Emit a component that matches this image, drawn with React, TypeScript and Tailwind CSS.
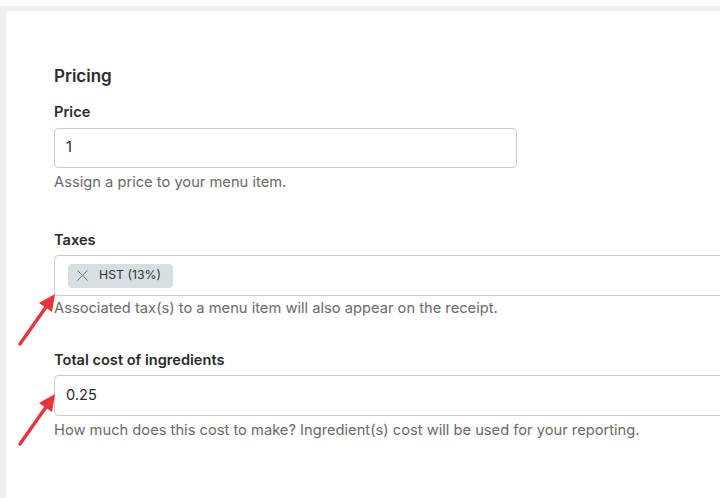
import React from "react";

function Arrow({ className }: { className: string }) {
  return (
    <svg
      className={className}
      width="44"
      height="56"
      viewBox="0 0 44 56"
      fill="none"
    >
      <line x1="4" y1="52" x2="30" y2="15" stroke="#e8343a" strokeWidth="3.4" strokeLinecap="round" />
      <polygon points="39,2 23,11 36,20" fill="#e8343a" />
    </svg>
  );
}

export default function App() {
  const font = { fontFamily: 'Inter, "Liberation Sans", Arial, sans-serif' };
  return (
    <div className="w-[720px] h-[498px] overflow-hidden bg-white pt-[6px]" style={font}>
      <div className="h-full bg-[#efefef] pl-[6px] pt-[5px]">
        <div className="relative h-full bg-white rounded-tl-[3px] pl-[48px] pt-[54px] text-[#2b2b2b]">
          <h2 className="text-[17px] leading-[22px] font-semibold">Pricing</h2>

          <div className="mt-[15px] text-[14.6px] leading-[20px] font-semibold">Price</div>
          <div className="mt-[6px] w-[463px] h-[40px] rounded-[4px] border border-[#cccccc] flex items-center pl-[11px] text-[14.6px]">
            1
          </div>
          <div className="mt-[4px] text-[14.7px] leading-[20px] text-[#6a6a6a]">
            Assign a price to your menu item.
          </div>

          <div className="mt-[38px] text-[14.6px] leading-[20px] font-semibold">Taxes</div>
          <div className="mt-[5px] w-[700px] h-[41px] rounded-[4px] border border-[#cccccc] flex items-center pl-[13px]">
            <div className="flex items-center h-[24px] rounded-[4px] bg-[#d8dfe2] pl-[9px] pr-[12px]">
              <svg width="11" height="11" viewBox="0 0 11 11" className="mr-[11px]">
                <path d="M0.5 0.5 L10.5 10.5 M10.5 0.5 L0.5 10.5" stroke="#6b7478" strokeWidth="1" />
              </svg>
              <span className="text-[12.3px] text-[#333333]">HST (13%)</span>
            </div>
          </div>
          <div className="mt-[2px] text-[14.7px] leading-[20px] text-[#6a6a6a]">
            Associated tax(s) to a menu item will also appear on the receipt.
          </div>

          <div className="mt-[32px] text-[14.6px] leading-[20px] font-semibold">Total cost of ingredients</div>
          <div className="mt-[5px] w-[700px] h-[41px] rounded-[4px] border border-[#cccccc] flex items-center pl-[11px] text-[14.6px]">
            0.25
          </div>
          <div className="mt-[4px] text-[14.7px] leading-[20px] text-[#6a6a6a]">
            How much does this cost to make? Ingredient(s) cost will be used for your reporting.
          </div>

          <Arrow className="absolute left-[10px] top-[281px]" />
          <Arrow className="absolute left-[10px] top-[381px]" />
        </div>
      </div>
    </div>
  );
}
